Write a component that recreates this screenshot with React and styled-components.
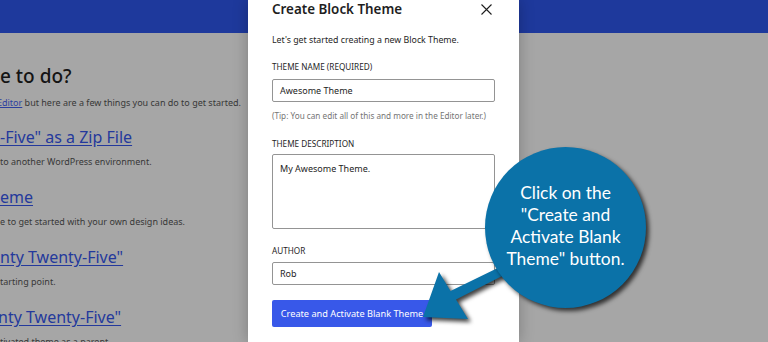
import React from 'react'
import styled, { createGlobalStyle } from 'styled-components'

const GlobalStyle = createGlobalStyle`
  html, body {
    margin: 0;
    padding: 0;
    overflow: hidden;
  }
  body {
    font-family: "Noto Sans", "Open Sans", sans-serif;
  }
`

const Page = styled.div`
  position: relative;
  display: flex;
  width: 768px;
  height: 342px;
  overflow: hidden;
  background: #a6a6a6;
`

const Pane = styled.div`
  display: flex;
  flex-direction: column;
  width: ${props => props.width || 'auto'};
  flex: ${props => (props.grow ? 1 : 'none')};
  overflow: hidden;
`

const TopBar = styled.div`
  height: 33px;
  flex: none;
  background: #1e399c;
`

const Content = styled.div`
  display: flex;
  flex-direction: column;
  padding-top: 31px;
  white-space: nowrap;
`

const Heading = styled.div`
  font-size: 19px;
  line-height: 24px;
  font-weight: 500;
  color: #141414;
`

const Text = styled.div`
  font-size: 9px;
  line-height: 14px;
  color: #383838;
  margin-top: ${props => props.mt || 0}px;
  margin-left: ${props => props.ml || 0}px;
`

const Link = styled.a`
  color: #2c3f9e;
  text-decoration: underline;
`

const BigLink = styled.a`
  display: block;
  font-size: 16px;
  line-height: 20px;
  color: #24399c;
  text-decoration: underline;
  text-underline-offset: 2px;
  margin-top: ${props => props.mt || 0}px;
  margin-left: ${props => props.ml || 0}px;
`

const Modal = styled.div`
  position: relative;
  z-index: 1;
  width: 271px;
  flex: none;
  box-sizing: border-box;
  padding: 0 24px;
  background: #fff;
  box-shadow: 0 0 14px rgba(0, 0, 0, 0.25);
  display: flex;
  flex-direction: column;
  color: #1e1e1e;
  white-space: nowrap;
`

const Header = styled.div`
  display: flex;
  align-items: center;
  justify-content: space-between;
  height: 18px;
`

const Title = styled.div`
  font-size: 13.4px;
  font-weight: 600;
  line-height: 18px;
`

const Close = styled.svg`
  width: 11px;
  height: 11px;
  margin-right: 3px;
`

const Intro = styled.div`
  font-size: 8.8px;
  line-height: 14px;
  margin-top: 15px;
`

const Label = styled.div`
  font-size: 8.2px;
  line-height: 12px;
  text-transform: uppercase;
  margin-top: ${props => props.mt}px;
`

const Field = styled.div`
  box-sizing: border-box;
  height: ${props => props.h || 23}px;
  margin-top: ${props => props.mt || 6}px;
  border: 1px solid #949494;
  border-radius: 2px;
  padding: ${props => (props.h ? '8px 7px' : '0 7px')};
  display: flex;
  align-items: ${props => (props.h ? 'flex-start' : 'center')};
  font-size: 9px;
  line-height: 12px;
  color: #1e1e1e;
`

const Help = styled.div`
  font-size: 8.2px;
  line-height: 12px;
  color: #757575;
  margin-top: 8px;
`

const Button = styled.div`
  align-self: flex-start;
  width: 160px;
  height: 27px;
  margin-top: 15px;
  border-radius: 2px;
  background: #3858e9;
  color: #fff;
  font-size: 9.2px;
  display: flex;
  align-items: center;
  justify-content: center;
`

const Arrow = styled.svg`
  position: absolute;
  left: 0;
  top: 0;
  z-index: 2;
  width: 768px;
  height: 342px;
  pointer-events: none;
  filter: drop-shadow(3px 3px 2px rgba(0, 0, 0, 0.75));
`

const Bubble = styled.div`
  position: absolute;
  z-index: 3;
  left: 485px;
  top: 147px;
  width: 161px;
  height: 161px;
  box-sizing: border-box;
  padding-bottom: 4px;
  border-radius: 50%;
  background: #0b72a8;
  box-shadow: 3px 3px 4px rgba(0, 0, 0, 0.7);
  display: flex;
  align-items: center;
  justify-content: center;
  text-align: center;
  color: #fff;
  font-family: Lato, "Open Sans", sans-serif;
  font-size: 17.4px;
  line-height: 22px;
`

export default function App() {
  return (
    <>
      <GlobalStyle />
      <Page>
        <Pane width="248px">
          <TopBar />
          <Content>
            <Heading>e to do?</Heading>
            <Text mt={8} ml={-3}>
              <Link>Editor</Link> but here are a few things you can do to get started.
            </Text>
            <BigLink mt={17}>-Five" as a Zip File</BigLink>
            <Text mt={8}>to another WordPress environment.</Text>
            <BigLink mt={18}>eme</BigLink>
            <Text mt={8}>e to get started with your own design ideas.</Text>
            <BigLink mt={18}>nty Twenty-Five"</BigLink>
            <Text mt={8}>tarting point.</Text>
            <BigLink mt={18} ml={-2}>nty Twenty-Five"</BigLink>
            <Text mt={8}>tivated theme as a parent.</Text>
          </Content>
        </Pane>

        <Modal>
          <Header>
            <Title>Create Block Theme</Title>
            <Close viewBox="0 0 11 11">
              <path d="M0.5 0.5 L10.5 10.5 M10.5 0.5 L0.5 10.5" stroke="#1e1e1e" strokeWidth="1.1" />
            </Close>
          </Header>
          <Intro>Let's get started creating a new Block Theme.</Intro>
          <Label mt={14}>Theme name (required)</Label>
          <Field>Awesome Theme</Field>
          <Help>(Tip: You can edit all of this and more in the Editor later.)</Help>
          <Label mt={16}>Theme description</Label>
          <Field h={75} mt={4}>My Awesome Theme.</Field>
          <Label mt={16}>Author</Label>
          <Field mt={5}>Rob</Field>
          <Button>Create and Activate Blank Theme</Button>
        </Modal>

        <Pane grow>
          <TopBar />
        </Pane>

        <Arrow viewBox="0 0 768 342">
          <polygon
            points="423,317 439,272 450.5,291 510,262 514,270 456,299.5 468,319"
            fill="#0b72a8"
          />
        </Arrow>
        <Bubble>
          Click on the
          <br />
          "Create and
          <br />
          Activate Blank
          <br />
          Theme" button.
        </Bubble>
      </Page>
    </>
  )
}
